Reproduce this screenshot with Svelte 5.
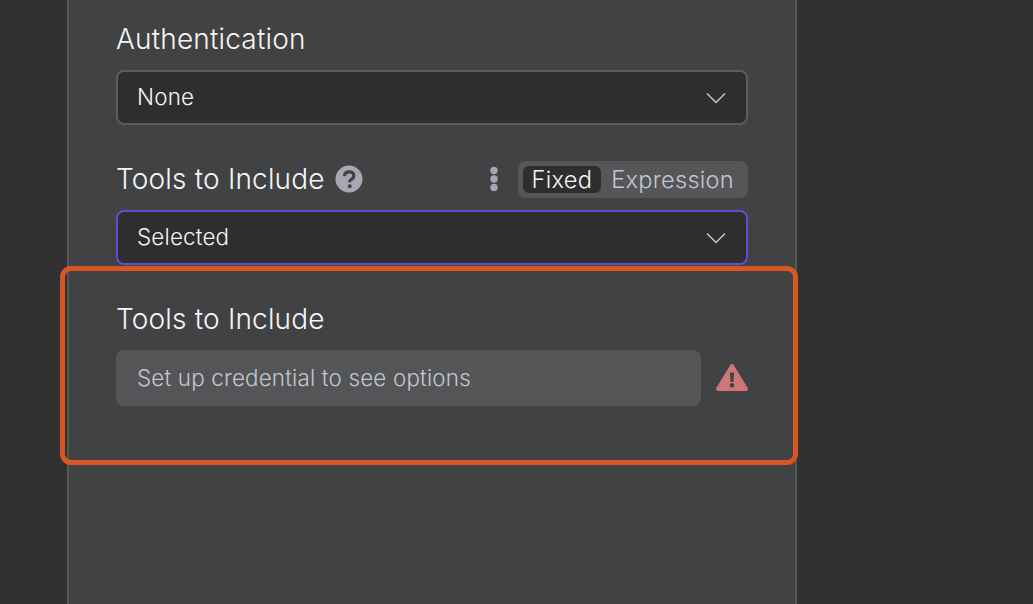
<script>
  const fields = [
    { label: 'Authentication', value: 'None', kind: 'select' },
    { label: 'Tools to Include', value: 'Selected', kind: 'select', focused: true, extras: true },
    { label: 'Tools to Include', value: 'Set up credential to see options', kind: 'disabled' }
  ];
</script>

<div class="page">
  <section class="panel">
    {#each fields as f}
      <div class="field">
        <div class="head">
          <span class="label">{f.label}</span>
          {#if f.extras}
            <svg class="help" viewBox="0 0 28 28" width="28" height="28" aria-hidden="true">
              <circle cx="14" cy="14" r="13.5" fill="#a6a7b3" />
              <path d="M9.4 11.2c.2-2.7 2.2-4.3 4.8-4.3 2.7 0 4.6 1.5 4.6 3.9 0 1.7-.9 2.7-2.4 3.6-1.2.8-1.7 1.2-1.7 2.4v.4" fill="none" stroke="#414244" stroke-width="3.2" />
              <circle cx="14.7" cy="21.2" r="2" fill="#414244" />
            </svg>
            <div class="spacer"></div>
            <svg class="dots" viewBox="0 0 10 28" width="10" height="28" aria-hidden="true">
              <circle cx="5" cy="5.5" r="3.7" fill="#a6a7b3" />
              <circle cx="5" cy="14" r="3.7" fill="#a6a7b3" />
              <circle cx="5" cy="22.5" r="3.7" fill="#a6a7b3" />
            </svg>
            <div class="toggle">
              <span class="opt active">Fixed</span>
              <span class="opt">Expression</span>
            </div>
          {/if}
        </div>
        {#if f.kind === 'select'}
          <div class="select" class:focused={f.focused}>
            <span class="value">{f.value}</span>
            <svg viewBox="0 0 20 12" width="20" height="12" aria-hidden="true">
              <path d="M1 1.5 10 10.5 19 1.5" fill="none" stroke="#c4c5d0" stroke-width="1.5" />
            </svg>
          </div>
        {:else}
          <div class="row">
            <div class="disabled"><span class="value">{f.value}</span></div>
            <svg class="warn" viewBox="0 0 34 30" width="34" height="30" aria-hidden="true">
              <path d="M17 4 31 27H3Z" fill="#cf7676" stroke="#cf7676" stroke-width="4" stroke-linejoin="round" />
              <path d="M14.9 10.5h4.2l-.7 9.5h-2.8Z" fill="#414244" />
              <circle cx="17" cy="23.3" r="2.2" fill="#414244" />
            </svg>
          </div>
        {/if}
      </div>
    {/each}
  </section>
  <div class="highlight"></div>
</div>

<style>
  :global(body) {
    margin: 0;
    background: #313131;
  }
  .page {
    position: relative;
    width: 1033px;
    height: 604px;
    overflow: hidden;
    background: #313131;
    font-family: Inter, "Liberation Sans", sans-serif;
    font-weight: 360;
  }
  .panel {
    box-sizing: border-box;
    margin-left: 67px;
    width: 730px;
    height: 604px;
    padding: 19px 47px 0;
    display: flex;
    flex-direction: column;
    gap: 34px;
    background: #414244;
    border-left: 2px solid #56575a;
    border-right: 2px solid #56575a;
  }
  .field {
    display: flex;
    flex-direction: column;
    gap: 11px;
  }
  .head {
    display: flex;
    align-items: center;
    height: 40px;
  }
  .label {
    font-size: 28px;
    color: #f5f5f5;
    letter-spacing: 0.18px;
  }
  .help {
    margin-left: 10px;
  }
  .spacer {
    flex: 1;
  }
  .dots {
    margin-right: 19px;
  }
  .toggle {
    display: flex;
    align-items: center;
    box-sizing: border-box;
    height: 37px;
    padding: 0 14px 0 5px;
    gap: 10px;
    border-radius: 8px;
    background: #555658;
    font-size: 23.6px;
    letter-spacing: 0.26px;
    color: #c4c5d3;
  }
  .opt {
    line-height: 27px;
  }
  .active {
    padding: 0 9px;
    border-radius: 6px;
    background: #2e2e2e;
    color: #f5f5f5;
  }
  .select {
    box-sizing: border-box;
    height: 55px;
    padding: 0 20px 0 19px;
    display: flex;
    align-items: center;
    justify-content: space-between;
    border: 2px solid #5b5c5f;
    border-radius: 8px;
    background: #2e2e2e;
    color: #f5f5f5;
    font-size: 22.4px;
    letter-spacing: 0.18px;
  }
  .value {
    padding-bottom: 2px;
  }
  .focused {
    border-color: #5e50d6;
  }
  .row {
    display: flex;
    align-items: center;
    justify-content: space-between;
  }
  .disabled {
    box-sizing: border-box;
    width: 585px;
    height: 56px;
    padding-left: 21px;
    display: flex;
    align-items: center;
    border-radius: 8px;
    background: #545557;
    color: #c4c5d3;
    font-size: 22.4px;
    letter-spacing: 0.18px;
  }
  .warn {
    margin: 0 -1px 3px 0;
  }
  .highlight {
    position: absolute;
    left: 60px;
    top: 266px;
    width: 738px;
    height: 199px;
    box-sizing: border-box;
    border: 5px solid #d75621;
    border-radius: 11px;
  }
</style>
